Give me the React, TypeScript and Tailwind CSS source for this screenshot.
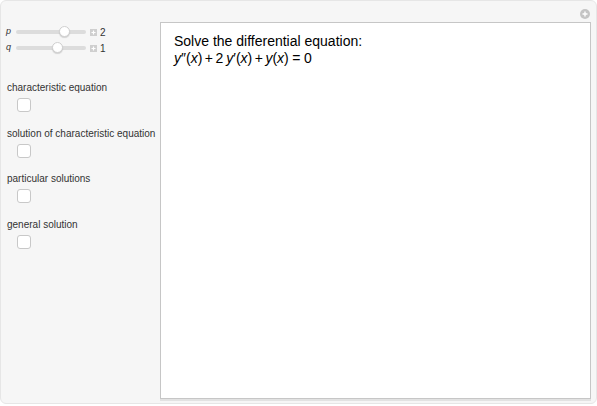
import React from "react";

function Slider({ label, pos, value }: { label: string; pos: number; value: string }) {
  return (
    <div className="flex items-center h-[16px]">
      <span className="w-[10px] pl-[5px] text-[9px] italic text-[#333]">{label}</span>
      <div className="relative ml-[5px] w-[70px] h-[16px] flex items-center">
        <div className="w-full h-[4px] rounded-full bg-[#dcdcdc]" />
        <div
          className="absolute top-[2px] w-[11px] h-[11px] rounded-full bg-white border border-[#d0d0d0] shadow-[0_1px_1px_rgba(0,0,0,0.15)]"
          style={{ left: pos }}
        />
      </div>
      <div className="ml-[4px] w-[7px] h-[7px] bg-[#cfcfcf] flex items-center justify-center">
        <svg width="5" height="5" viewBox="0 0 5 5">
          <path d="M2.5 0.5v4M0.5 2.5h4" stroke="#fff" strokeWidth="1.2" />
        </svg>
      </div>
      <span className="ml-[3px] text-[10px] text-[#333]">{value}</span>
    </div>
  );
}

function Check({ label }: { label: string }) {
  return (
    <div className="flex flex-col">
      <span className="pl-[6px] text-[10px] leading-[12px] text-[#333]">{label}</span>
      <div className="ml-[16px] mt-[4px] w-[14px] h-[14px] rounded-[3px] bg-white border border-[#c8c8c8]" />
    </div>
  );
}

export default function App() {
  return (
    <div
      className="w-[597px] h-[406px] bg-white"
      style={{ fontFamily: '"Liberation Sans", Arial, Helvetica, sans-serif' }}
    >
      <div className="w-[597px] h-[404px] bg-[#f6f6f6] border border-[#e6e6e6] rounded-[6px] flex relative">
        <div className="absolute right-[6px] top-[8px] w-[10px] h-[10px] rounded-full bg-[#c4c4c4] flex items-center justify-center">
          <svg width="6" height="6" viewBox="0 0 6 6">
            <path d="M3 0.5v5M0.5 3h5" stroke="#fff" strokeWidth="1.4" />
          </svg>
        </div>
        <div className="w-[159px] flex flex-col pt-[23px]">
          <Slider label="p" pos={43} value="2" />
          <Slider label="q" pos={36} value="1" />
          <div className="flex flex-col gap-[15.5px] mt-[26px]">
            <Check label="characteristic equation" />
            <Check label="solution of characteristic equation" />
            <Check label="particular solutions" />
            <Check label="general solution" />
          </div>
        </div>
        <div className="mt-[21px] w-[431px] h-[377px] bg-white border border-[#c6c6c6] shadow-[0_2px_0_#e2e2e2] pt-[10px] pl-[13px]">
          <div className="text-[14px] leading-[17px] text-black">Solve the differential equation:</div>
          <div className="text-[14px] leading-[17px] text-black flex items-baseline">
            <span><i>y</i>″(<i>x</i>)</span>
            <span className="mx-[2.5px]">+</span>
            <span>2</span>
            <span className="ml-[3px]"><i>y</i>′(<i>x</i>)</span>
            <span className="mx-[2.5px]">+</span>
            <span><i>y</i>(<i>x</i>)</span>
            <span className="mx-[3.5px]">=</span>
            <span>0</span>
          </div>
        </div>
      </div>
    </div>
  );
}
